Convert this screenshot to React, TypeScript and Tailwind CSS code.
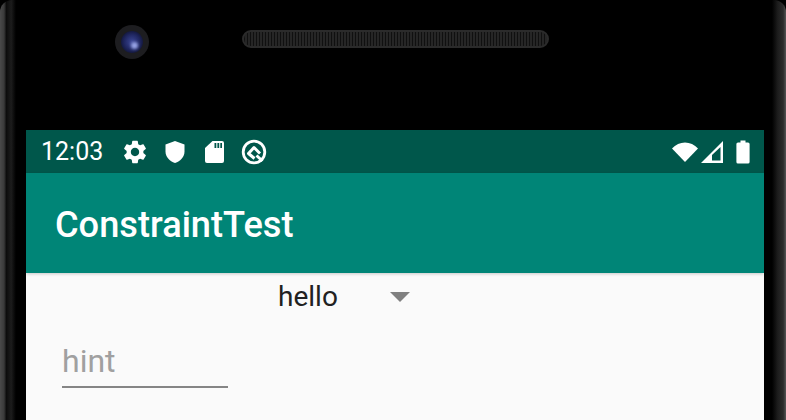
const sans = "font-['Roboto',sans-serif]";

function Camera() {
  return (
    <div className="w-[34px] h-[34px] rounded-full bg-[#1d1d20] flex items-center justify-center">
      <div className="relative w-[22px] h-[22px] rounded-full bg-[radial-gradient(circle_at_50%_50%,#3c4796_0%,#1f2660_50%,#05060f_100%)]">
        <div className="absolute left-[10px] top-[11px] w-[7px] h-[7px] rounded-full bg-[#98a4e6] blur-[1.5px]" />
      </div>
    </div>
  );
}

function Speaker() {
  return (
    <div className="w-[307px] h-[18px] rounded-full border-2 border-[#2b2b2b] bg-[#1a1a1a] bg-[repeating-linear-gradient(90deg,#101010_0px,#101010_1px,#262626_1px,#262626_3px)]" />
  );
}

function StatusIcons() {
  return (
    <div className="flex items-center">
      <svg width="28" height="28" viewBox="0 0 24 24" fill="white">
        <path d="M19.14 12.94c.04-.3.06-.61.06-.94 0-.32-.02-.64-.07-.94l2.03-1.58c.18-.14.23-.41.12-.61l-1.92-3.32c-.12-.22-.37-.29-.59-.22l-2.39.96c-.5-.38-1.03-.7-1.62-.94l-.36-2.54c-.04-.24-.24-.41-.48-.41h-3.84c-.24 0-.43.17-.47.41l-.36 2.54c-.59.24-1.13.57-1.62.94l-2.39-.96c-.22-.08-.47 0-.59.22L2.74 8.87c-.12.21-.08.47.12.61l2.03 1.58c-.05.3-.09.63-.09.94s.02.64.07.94l-2.03 1.58c-.18.14-.23.41-.12.61l1.92 3.32c.12.22.37.29.59.22l2.39-.96c.5.38 1.03.7 1.62.94l.36 2.54c.05.24.24.41.48.41h3.84c.24 0 .44-.17.47-.41l.36-2.54c.59-.24 1.13-.56 1.62-.94l2.39.96c.22.08.47 0 .59-.22l1.92-3.32c.12-.22.07-.47-.12-.61l-2.01-1.58zM12 15.6c-1.98 0-3.6-1.62-3.6-3.6s1.62-3.6 3.6-3.6 3.6 1.62 3.6 3.6-1.62 3.6-3.6 3.6z" />
      </svg>
      <svg width="20" height="24" viewBox="0 0 20 24" fill="white" className="ml-[16px]">
        <path d="M10 1 L19.5 4.5 V11.5 C19.5 17 15.5 21 10 23 C4.5 21 0.5 17 0.5 11.5 V4.5 Z" />
      </svg>
      <svg width="19" height="24" viewBox="0 0 19 24" className="ml-[20px]">
        <path fill="white" d="M7.5 1 H17 a2 2 0 0 1 2 2 V21 a2 2 0 0 1 -2 2 H2 a2 2 0 0 1 -2 -2 V8 Z" />
        <path fill="#00574b" d="M9.5 3h1.8v5h-1.8z M12.4 3h1.8v5h-1.8z M15.3 3h1.7v5h-1.7z" />
      </svg>
      <svg width="26" height="26" viewBox="0 0 26 26" fill="none" stroke="white" strokeWidth="2.8" className="ml-[17px]">
        <circle cx="13" cy="13" r="10.8" />
        <path d="M13.5 19.5 L7.5 14.5 L13 8.5 L19 14.5 M15.5 16.5 L21.5 22" strokeLinejoin="round" strokeWidth="3" />
      </svg>
    </div>
  );
}

function SystemIcons() {
  return (
    <div className="flex items-center">
      <svg width="26" height="20" viewBox="0 0 26 20" fill="white">
        <path d="M0 6.5 C7 -1.5 19 -1.5 26 6.5 L13 20 Z" />
      </svg>
      <svg width="22" height="22" viewBox="0 0 22 22" className="ml-[3px]">
        <path fill="white" d="M22 0 V22 H0 Z" />
        <path fill="#00574b" d="M19.5 6 V19.5 H11 V14 Z" />
      </svg>
      <svg width="14" height="24" viewBox="0 0 14 24" fill="white" className="ml-[13px]">
        <path d="M4.5 0.5 H9.5 V2.5 H12 a1.6 1.6 0 0 1 1.6 1.6 V22 a1.6 1.6 0 0 1 -1.6 1.6 H2 a1.6 1.6 0 0 1 -1.6 -1.6 V4.1 A1.6 1.6 0 0 1 2 2.5 H4.5 Z" />
      </svg>
    </div>
  );
}

export default function App() {
  return (
    <div className={`w-[786px] h-[420px] overflow-hidden bg-black relative ${sans}`}>
      {/* device edge, sits over the black */}
      <div className="absolute left-0 top-0 bottom-0 w-[16px] bg-[linear-gradient(90deg,#4a4a4a_0%,#3a3a3a_25%,#0c0c0c_40%,#1c1c1c_70%,#000_100%)] rounded-tl-[12px]" />
      <div className="absolute right-0 top-0 bottom-0 w-[14px] bg-[linear-gradient(270deg,#555_0%,#2c2c2c_20%,#1c1c1c_60%,#000_100%)] rounded-tr-[12px]" />

      <div className="relative h-full pl-[26px] pr-[22px] flex flex-col">
        <div className="h-[130px] shrink-0 flex items-start pt-[25px] pl-[89px] gap-[93px]">
          <Camera />
          <div className="pt-[5px]">
            <Speaker />
          </div>
        </div>

        <div className="h-[43px] shrink-0 bg-[#00574b] flex items-center justify-between pl-[15px] pr-[14px] text-white">
          <div className="flex items-center gap-[18px]">
            <span className="text-[25px] leading-none font-normal">12:03</span>
            <StatusIcons />
          </div>
          <SystemIcons />
        </div>

        <div className="h-[100px] shrink-0 bg-[#008577] flex items-center pl-[29px] shadow-[0_1px_3px_rgba(0,0,0,0.2)] z-10">
          <span className="text-[36.2px] font-medium text-white leading-none pt-[4px]">ConstraintTest</span>
        </div>

        <div className="flex-1 bg-[#fafafa]">
          <div className="h-[47px] flex items-center pl-[252px]">
            <span className="text-[28px] text-[#212121] leading-none">hello</span>
            <div className="ml-[52px] w-0 h-0 border-x-[10px] border-x-transparent border-t-[10px] border-t-[#808080]" />
          </div>
          <div className="ml-[36px] w-[166px] h-[68px] border-b-2 border-[#858585] flex items-end">
            <span className="text-[32px] text-[#a0a0a0] leading-none pb-[9px]">hint</span>
          </div>
        </div>
      </div>
    </div>
  );
}
